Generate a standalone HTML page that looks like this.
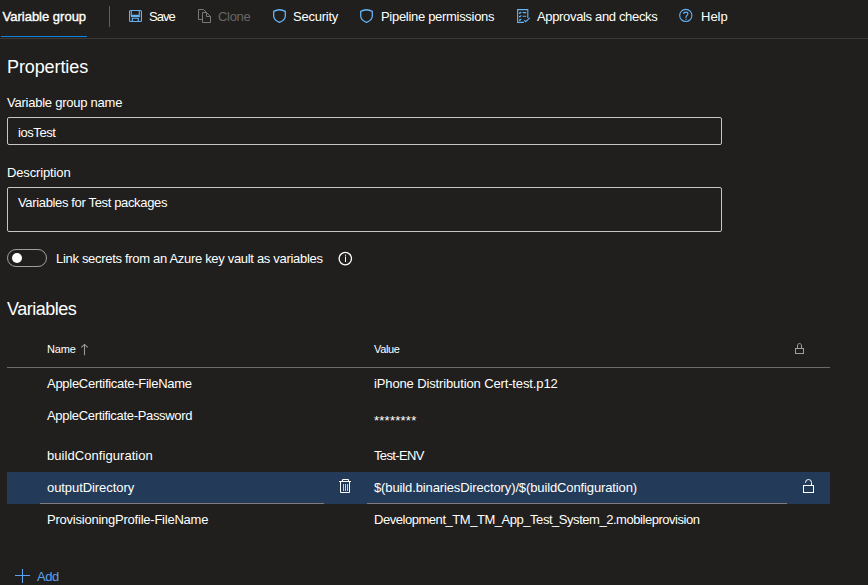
<!DOCTYPE html>
<html><head><meta charset="utf-8">
<style>
html,body{margin:0;padding:0;}
body{width:868px;height:585px;overflow:hidden;background:#201f1e;position:relative;font-family:"Liberation Sans",sans-serif;color:#fff;}
.a{position:absolute;white-space:pre;}
.t{font-size:13px;line-height:20px;}
.h{font-size:18px;line-height:24px;}
.s{font-size:12px;line-height:16px;}
svg{position:absolute;overflow:visible;}
.line{position:absolute;height:1px;}
</style></head><body>
<!-- toolbar -->
<div class="a t" style="left:2.5px;top:7px;letter-spacing:0px;-webkit-text-stroke:0.35px #fff;color:#fff">Variable group</div>
<div class="line" style="left:1px;top:36px;width:86px;height:1px;background:#0f83e0"></div>
<div class="line" style="left:0;top:38px;width:868px;background:#3b3a39"></div>
<div class="line" style="left:109px;top:6px;width:1px;height:21px;background:#605e5c"></div>

<svg style="left:129px;top:10px" width="13" height="12" viewBox="0 0 13 12"><g fill="none" stroke="#66b3f4" stroke-width="1.1"><rect x="0.55" y="0.55" width="11.9" height="10.9" rx="1"/><path d="M2.3 0.6V5.4H10.3V0.6"/><path d="M2 6.5H11"/><path d="M3.3 11.4V8.2H9.3V11.4"/></g></svg>
<div class="a t" style="left:149px;top:7px;letter-spacing:-1px">Save</div>

<svg style="left:194px;top:6px" width="22" height="20" viewBox="194 6 22 20"><g fill="none" stroke="#787776" stroke-width="1"><path d="M202.5 19.5H198.5V9.5H203.5L206.5 12.5"/><path d="M202.5 12.5H206.5L210.5 16.5V22.5H202.5Z"/><path d="M206.5 12.5V16.5H210.5"/></g></svg>
<div class="a t" style="left:218px;top:7px;letter-spacing:-0.3px;color:#686766">Clone</div>

<svg style="left:273px;top:9px" width="13" height="14" viewBox="0 0 13 14"><path d="M0.7 2.4Q6.5 -0.9 12.3 2.4V7C12.3 10 10 12 6.5 13.4C3 12 0.7 10 0.7 7Z" fill="none" stroke="#68b6fa" stroke-width="1.25"/></svg>
<div class="a t" style="left:293px;top:7px;letter-spacing:-0.23px">Security</div>

<svg style="left:360px;top:9px" width="13" height="14" viewBox="0 0 13 14"><path d="M0.7 2.4Q6.5 -0.9 12.3 2.4V7C12.3 10 10 12 6.5 13.4C3 12 0.7 10 0.7 7Z" fill="none" stroke="#68b6fa" stroke-width="1.25"/></svg>
<div class="a t" style="left:381px;top:7px;letter-spacing:-0.3px">Pipeline permissions</div>

<svg style="left:505px;top:0px" width="40" height="30" viewBox="505 0 40 30"><g fill="none" stroke="#62b2f6" stroke-width="1.1"><path d="M524 22.4H517.6V9.6H527.8V18"/><path d="M519 12.6l0.8 0.8 1.5-1.6M519 16.1l0.8 0.8 1.5-1.6M519 19.6l0.8 0.8 1.5-1.6"/><path d="M522.6 12.6H526.2M522.6 16.3H526.2"/><path d="M524.2 20.2L525.7 21.7L529.8 17.8"/></g></svg>
<div class="a t" style="left:537px;top:7px;letter-spacing:-0.34px">Approvals and checks</div>

<svg style="left:674px;top:4px" width="24" height="22" viewBox="674 4 24 22"><g fill="none" stroke="#62b2f6" stroke-width="1.1"><circle cx="685.8" cy="15.45" r="6.1"/><path d="M683.7 13.9C683.7 12.8 684.6 12.1 685.8 12.1S687.9 12.8 687.9 13.9C687.9 15.2 686 15.4 686 17.2V18.2"/></g><circle cx="686" cy="19.3" r="0.65" fill="#62b2f6"/></svg>
<div class="a t" style="left:701px;top:7px">Help</div>

<!-- properties -->
<div class="a h" style="left:7px;top:55px;letter-spacing:-0.1px">Properties</div>
<div class="a t" style="left:7px;top:93px;letter-spacing:-0.24px">Variable group name</div>
<div class="a" style="left:7px;top:117px;width:713px;height:26px;border:1px solid #c8c6c4;border-radius:2px"></div>
<div class="a t" style="left:18px;top:123px;letter-spacing:-0.42px">iosTest</div>

<div class="a t" style="left:7px;top:163px;letter-spacing:-0.14px">Description</div>
<div class="a" style="left:7px;top:187px;width:713px;height:43px;border:1px solid #c8c6c4;border-radius:2px"></div>
<div class="a t" style="left:18px;top:193px;letter-spacing:-0.35px">Variables for Test packages</div>

<div class="a" style="left:7px;top:249px;width:38px;height:16px;border:1px solid #a19f9d;border-radius:9px"></div>
<div class="a" style="left:12px;top:253px;width:10px;height:10px;border-radius:5px;background:#fff"></div>
<div class="a t" style="left:56px;top:249px;letter-spacing:-0.31px">Link secrets from an Azure key vault as variables</div>
<svg style="left:334px;top:248px" width="22" height="22" viewBox="334 248 22 22"><circle cx="345.3" cy="258.6" r="6.2" fill="none" stroke="#fff" stroke-width="1.3"/><path d="M345.5 256.5V262" stroke="#fff" stroke-width="1"/><circle cx="345.5" cy="255.2" r="0.6" fill="#fff"/></svg>

<!-- variables -->
<div class="a h" style="left:7px;top:297px;letter-spacing:-0.5px">Variables</div>
<div class="a s" style="left:47px;top:341px;font-size:11px;letter-spacing:-0.15px">Name</div>
<svg style="left:76px;top:340px" width="16" height="18" viewBox="76 340 16 18"><path d="M84.5 344.8V355.2M81.3 347.3L84.5 344.4L87.7 347.3" fill="none" stroke="#9b9997" stroke-width="1.1"/></svg>
<div class="a s" style="left:374px;top:341px;font-size:11px;letter-spacing:-0.35px">Value</div>
<svg style="left:795px;top:343px" width="10" height="11" viewBox="0 0 10 11"><g fill="none" stroke="#a19f9d" stroke-width="1"><path d="M2.5 5.5V3C2.5 1.5 3.3 0.5 4.5 0.5S6.5 1.5 6.5 3V5.5"/><rect x="0.5" y="5.5" width="8" height="5"/></g></svg>
<div class="line" style="left:7px;top:367px;width:823px;background:#6d6c6b"></div>

<div class="a t" style="left:47px;top:374px;letter-spacing:-0.28px">AppleCertificate-FileName</div>
<div class="a t" style="left:374px;top:374px;letter-spacing:-0.13px">iPhone Distribution Cert-test.p12</div>

<div class="a t" style="left:47px;top:406px;letter-spacing:-0.32px">AppleCertificate-Password</div>
<div class="a t" style="left:374px;top:411px;letter-spacing:0.25px">********</div>

<div class="a t" style="left:47px;top:446px;letter-spacing:0.06px">buildConfiguration</div>
<div class="a t" style="left:374px;top:446px;letter-spacing:-0.63px">Test-ENV</div>

<div class="a" style="left:7px;top:472px;width:823px;height:32px;background:#233b58"></div>
<div class="line" style="left:40px;top:503px;width:284px;background:#7f7d7b"></div>
<div class="line" style="left:367px;top:503px;width:420px;background:#7f7d7b"></div>
<div class="a t" style="left:47px;top:478px;letter-spacing:-0.07px">outputDirectory</div>
<svg style="left:334px;top:475px" width="22" height="22" viewBox="334 475 22 22"><g fill="none" stroke="#fff" stroke-width="1"><path d="M339 481.5H351"/><path d="M342.5 481V479.5H348.5V481"/><path d="M340.5 482V492.5H349.5V482"/><path d="M343.5 484V491M345.5 484V491M347.5 484V491" opacity="0.75"/></g></svg>
<div class="a t" style="left:374px;top:478px;letter-spacing:-0.12px">$(build.binariesDirectory)/$(buildConfiguration)</div>
<svg style="left:796px;top:474px" width="24" height="24" viewBox="796 474 24 24"><g fill="none" stroke="#fff" stroke-width="1"><path d="M805.5 483V482.5A3 3 0 0 1 811.5 482.5V485.5"/><rect x="803.5" y="485.5" width="10" height="7"/></g></svg>

<div class="a t" style="left:47px;top:510px;letter-spacing:-0.23px">ProvisioningProfile-FileName</div>
<div class="a t" style="left:374px;top:510px;letter-spacing:-0.46px">Development_TM_TM_App_Test_System_2.mobileprovision</div>

<svg style="left:10px;top:565px" width="24" height="20" viewBox="10 565 24 20"><path d="M22.5 569V583M15 575.5H30" stroke="#5ba3ee" stroke-width="1.1"/></svg>
<div class="a t" style="left:37px;top:567px;letter-spacing:-0.45px;color:#5ba3ee">Add</div>
</body></html>
